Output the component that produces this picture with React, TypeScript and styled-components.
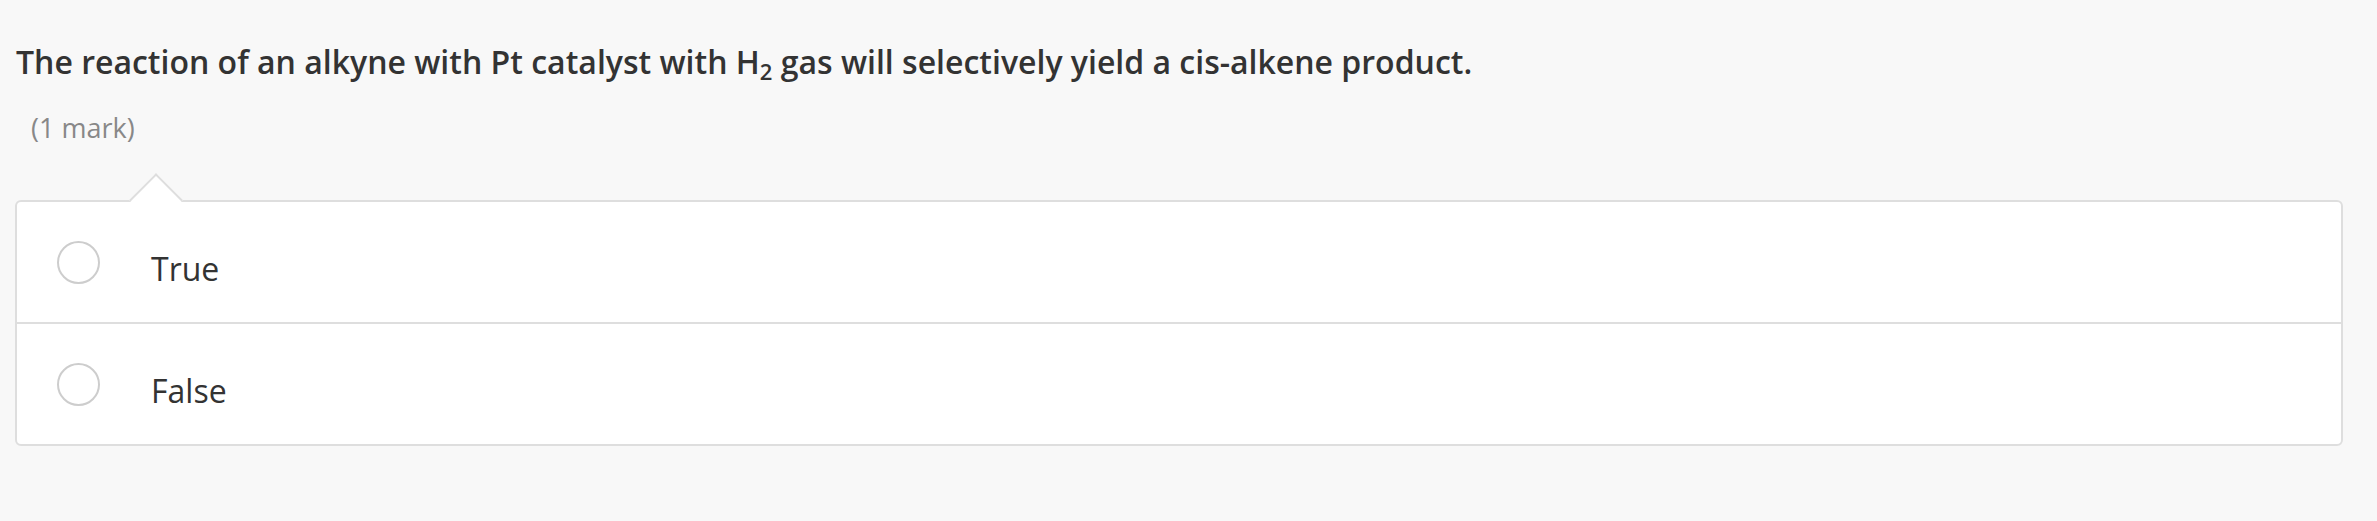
import styled, { createGlobalStyle } from 'styled-components';

const GlobalStyle = createGlobalStyle`
  html, body {
    margin: 0;
    padding: 0;
    background: #f8f8f8;
    font-family: "Open Sans", "Noto Sans", sans-serif;
    color: #333;
  }
`;

const Page = styled.div`
  padding: 40px 34px 40px 15px;
`;

const Question = styled.h2`
  margin: 0 0 0 1px;
  font-size: 32px;
  font-weight: 600;
  line-height: 44px;
  color: #333;

  sub {
    font-size: 22px;
    line-height: 0;
    vertical-align: -6px;
  }
`;

const Marks = styled.div`
  margin: 25px 0 0 16px;
  font-size: 27px;
  line-height: 37px;
  color: #888;
`;

const Card = styled.div`
  position: relative;
  margin-top: 54px;
  background: #fff;
  border: 2px solid #dedede;
  border-radius: 6px;

  &::before {
    content: '';
    position: absolute;
    top: -21px;
    left: 120px;
    width: 36px;
    height: 36px;
    background: #fff;
    border-top: 2px solid #dedede;
    border-left: 2px solid #dedede;
    transform: rotate(45deg);
  }
`;

const Option = styled.label<{ $last?: boolean }>`
  position: relative;
  display: flex;
  align-items: center;
  height: 120px;
  border-bottom: ${(p) => (p.$last ? 'none' : '2px solid #dedede')};
  cursor: pointer;
`;

const Radio = styled.span`
  box-sizing: border-box;
  flex: none;
  width: 43px;
  height: 43px;
  margin-left: 40px;
  border: 2px solid #cdcdcd;
  border-radius: 50%;
  background: #fff;
`;

const Label = styled.span`
  margin-left: 51px;
  padding-top: 12px;
  font-size: 32px;
  color: #333;
`;

const options = ['True', 'False'];

export default function App() {
  return (
    <>
      <GlobalStyle />
      <Page>
        <Question>
          The reaction of an alkyne with Pt catalyst with H<sub>2</sub> gas will
          selectively yield a cis-alkene product.
        </Question>
        <Marks>(1 mark)</Marks>
        <Card>
          {options.map((o, i) => (
            <Option key={o} $last={i === options.length - 1}>
              <Radio />
              <Label>{o}</Label>
            </Option>
          ))}
        </Card>
      </Page>
    </>
  );
}
